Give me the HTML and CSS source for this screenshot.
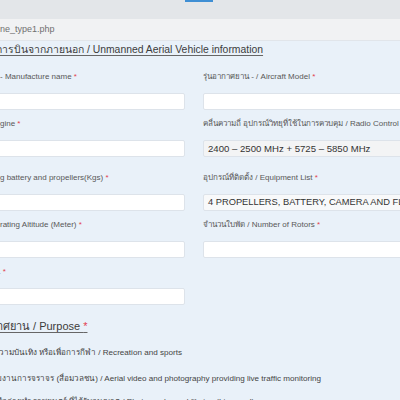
FILE: index.html
```html
<!DOCTYPE html>
<html lang="th">
<head>
<meta charset="utf-8">
<title>UAV form</title>
<link rel="stylesheet" href="styles.css">
</head>
<body>
<div class="tabbar"><span class="tabmark"></span></div>
<div class="urlbar">ne_type1.php</div>
<main class="page">
  <h2 class="section-title"><span class="clip clip-h"><span class="ul">ข้อมูลอากาศยานซึ่งควบคุมการบินจากภายนอก</span></span><span class="ul">&nbsp;/ Unmanned Aerial Vehicle information</span></h2>
  <div class="grid">
    <div class="field">
      <label class="lbl">- Manufacture name <span class="req">*</span></label>
      <div class="inp left"></div>
    </div>
    <div class="field">
      <label class="lbl">รุ่นอากาศยาน - / Aircraft Model <span class="req">*</span></label>
      <div class="inp"></div>
    </div>

    <div class="field">
      <label class="lbl">gine <span class="req">*</span></label>
      <div class="inp left"></div>
    </div>
    <div class="field">
      <label class="lbl">คลื่นความถี่ อุปกรณ์วิทยุที่ใช้ในการควบคุม / Radio Control Frequency</label>
      <div class="inp ro">2400 – 2500 MHz + 5725 – 5850 MHz</div>
    </div>

    <div class="field row3">
      <label class="lbl">g battery and propellers(Kgs) <span class="req">*</span></label>
      <div class="inp left"></div>
    </div>
    <div class="field row3">
      <label class="lbl">อุปกรณ์ที่ติดตั้ง / Equipment List <span class="req">*</span></label>
      <div class="inp ro light">4 PROPELLERS, BATTERY, CAMERA AND FLIGHT CONTROLLER</div>
    </div>

    <div class="field">
      <label class="lbl">rating Altitude (Meter) <span class="req">*</span></label>
      <div class="inp left"></div>
    </div>
    <div class="field">
      <label class="lbl">จำนวนใบพัด / Number of Rotors <span class="req">*</span></label>
      <div class="inp"></div>
    </div>

    <div class="field">
      <label class="lbl"><span class="cut-s">L</span> <span class="req">*</span></label>
      <div class="inp left"></div>
    </div>
  </div>

  <h3 class="purpose"><span class="clip clip-p"><span class="ul">วัตถุประสงค์การใช้อากาศยาน</span></span><span class="ul">&nbsp;/ Purpose </span><span class="req ul">*</span></h3>
  <ul class="options">
    <li><span class="clip clip-o1"><span>เพื่อนันทนาการ ความบันเทิง หรือเพื่อการกีฬา</span></span>&nbsp;/ Recreation and sports</li>
    <li><span class="clip clip-o2"><span>ถ่ายภาพวิดีโอรายงานการจราจร (สื่อมวลชน)</span></span>&nbsp;/ Aerial video and photography providing live traffic monitoring</li>
    <li class="last"><span class="clip clip-o3"><span>เพื่อการถ่ายภาพหรือถ่ายทำภาพยนตร์ ที่ได้รับอนุญาต</span></span>&nbsp;/ Photography and filming (Licensed)</li>
  </ul>
</main>
</body>
</html>
```
FILE: styles.css
```css
html, body {
  margin: 0;
  padding: 0;
  width: 400px;
  height: 400px;
  overflow: hidden;
  background: #e9f1f9;
  font-family: "Liberation Sans", "DejaVu Sans", sans-serif;
}

.tabbar {
  height: 19px;
  background: #e3e6e9;
  padding-left: 185px;
}

.tabmark {
  display: block;
  width: 28px;
  height: 2px;
  background: #3f8fd4;
}

.urlbar {
  height: 21px;
  line-height: 21px;
  background: #f1f2f3;
  border-bottom: 1px solid #e1e5ea;
  font-size: 9px;
  color: #707070;
  white-space: nowrap;
}

.page {
  white-space: nowrap;
}

/* clipped prefix: overflows to the left edge of the window */
.clip {
  display: inline-flex;
  justify-content: flex-end;
  overflow: hidden;
  vertical-align: top;
}

.clip > span {
  flex-shrink: 0;
  white-space: nowrap;
}

.ul {
  text-decoration: underline;
  text-underline-offset: 2px;
  text-decoration-color: #666;
}

.section-title {
  margin: 0;
  height: 18px;
  line-height: 18px;
  font-size: 10.4px;
  font-weight: normal;
  color: #3c3c3c;
}

.clip-h {
  width: 84px;
  height: 18px;
}

.grid {
  display: grid;
  grid-template-columns: 185px 215px;
  column-gap: 18px;
  row-gap: 8px;
  margin-top: 12px;
  width: 430px;
}

.field {
  min-width: 0;
}

.row3 {
  margin-top: 7px;
}

.lbl {
  display: block;
  height: 12px;
  line-height: 12px;
  font-size: 8px;
  color: #585858;
  margin-bottom: 10px;
  overflow: hidden;
  white-space: nowrap;
}

.req {
  color: #e2404f;
}

.cut-s {
  display: inline-block;
  margin-left: -4px;
}

.inp {
  box-sizing: border-box;
  height: 17px;
  background: #fff;
  border: 1px solid #dde3ea;
  border-radius: 2px;
  font-size: 9.6px;
  line-height: 15px;
  color: #333;
  padding-left: 4px;
  overflow: hidden;
  white-space: nowrap;
}

.inp.left {
  margin-left: -4px;
}

.inp.ro {
  background: #f3f4f5;
}

.inp.ro.light {
  background: #f8f9fa;
  font-size: 9.3px;
}

.purpose {
  margin: 13px 0 0 0;
  height: 16px;
  line-height: 16px;
  font-size: 11px;
  font-weight: normal;
  color: #3c3c3c;
}

.clip-p {
  width: 30px;
  height: 16px;
}

.options {
  list-style: none;
  margin: 0;
  padding: 0;
}

.options li {
  height: 26px;
  line-height: 26px;
  font-size: 8.1px;
  color: #444;
}

.options li:first-child {
  margin-top: 6px;
}

.options li.last {
  margin-top: -3px;
}

.options .clip {
  height: 26px;
}

.clip-o1 {
  width: 96px;
}

.clip-o2 {
  width: 98px;
}

.clip-o3 {
  width: 120px;
}
```
